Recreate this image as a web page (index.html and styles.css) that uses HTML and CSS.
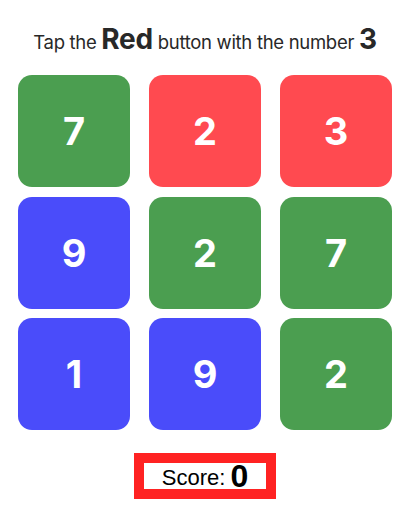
FILE: index.html
```html
<!DOCTYPE html>
<html lang="en">
<head>
    <meta charset="UTF-8">
    <meta name="viewport" content="width=device-width, initial-scale=1.0">
    <title>Color Tap</title>
    <link rel="stylesheet" href="styles.css">
</head>
<body>
    <main>
        <h1 class="prompt">Tap the <b class="big">Red</b> button with the number <b class="big">3</b></h1>
        <div class="grid">
            <button class="tile green">7</button>
            <button class="tile red">2</button>
            <button class="tile red">3</button>
            <button class="tile blue">9</button>
            <button class="tile green">2</button>
            <button class="tile green">7</button>
            <button class="tile blue">1</button>
            <button class="tile blue">9</button>
            <button class="tile green">2</button>
        </div>
        <div class="score">Score: <b>0</b></div>
    </main>
</body>
</html>
```

FILE: styles.css
```css
body {
    margin: 0;
    background-color: white;
    font-family: Inter, 'Noto Sans', sans-serif;
}

main {
    display: flex;
    flex-direction: column;
    align-items: center;
}

.prompt {
    margin: 22px 0 0;
    height: 38px;
    font-size: 18.5px;
    font-weight: 400;
    color: rgb(40, 40, 40);
    letter-spacing: -0.3px;
}

.prompt .big {
    font-size: 28px;
    font-weight: 700;
}

.grid {
    margin-top: 15px;
    display: grid;
    grid-template-columns: repeat(3, 112px);
    grid-auto-rows: 112px;
    gap: 9.5px 19px;
}

.tile {
    border: none;
    border-radius: 14px;
    color: white;
    font-family: Inter, sans-serif;
    font-size: 38px;
    font-weight: 700;
    padding: 0;
}

.green {
    background-color: rgb(75, 158, 80);
}

.red {
    background-color: rgb(255, 74, 80);
}

.blue {
    background-color: rgb(74, 76, 250);
}

.score {
    margin-top: 23px;
    width: 122px;
    height: 26px;
    border: 10px solid rgb(255, 34, 34);
    display: flex;
    align-items: flex-end;
    justify-content: center;
    font-family: 'Liberation Sans', Arial, sans-serif;
    font-size: 22px;
    line-height: 22px;
    color: black;
}

.score b {
    font-size: 32px;
    margin-left: 5px;
    line-height: 26px;
}
```
